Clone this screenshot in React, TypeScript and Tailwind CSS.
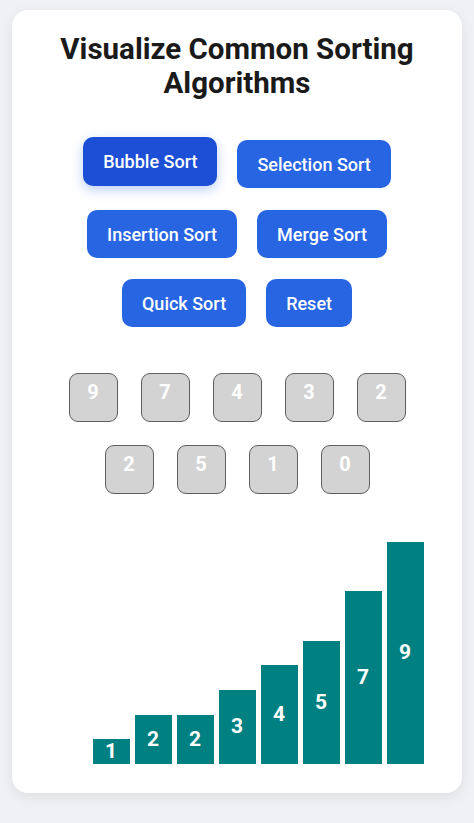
import React from "react";

const buttons = [
  ["Bubble Sort", true],
  ["Selection Sort", false],
  ["Insertion Sort", false],
  ["Merge Sort", false],
  ["Quick Sort", false],
  ["Reset", false],
] as const;

const boxes = [9, 7, 4, 3, 2, 2, 5, 1, 0];
const bars = [0, 1, 2, 2, 3, 4, 5, 7, 9];

export default function App() {
  return (
    <div
      className="min-h-screen bg-[#eff1f5] px-[12px] pt-[10px] pb-[31px]"
      style={{ fontFamily: "Roboto, 'Liberation Sans', sans-serif" }}
    >
      <div className="rounded-[16px] bg-white px-[20px] pt-[22px] pb-[29px] shadow-[0_4px_14px_rgba(0,0,0,0.08)]">
        <h1 className="text-center text-[29.5px] font-bold leading-[34px] text-[#1a1a1a]">
          Visualize Common Sorting
          <br />
          Algorithms
        </h1>

        <div className="mt-[40px] flex flex-wrap justify-center gap-x-[20px] gap-y-[21px]">
          {buttons.map(([label, active]) =>
            active ? (
              <button
                key={label}
                className="h-[49px] -translate-y-[3px] rounded-[10px] bg-[#1d4fd6] px-[20px] text-[18px] font-medium text-white shadow-[0_4px_12px_rgba(37,99,235,0.3)]"
              >
                {label}
              </button>
            ) : (
              <button
                key={label}
                className="h-[48px] rounded-[10px] bg-[#2865e3] px-[20px] text-[18px] font-medium text-white"
              >
                {label}
              </button>
            )
          )}
        </div>

        <div className="mx-auto mt-[46px] flex w-[380px] flex-wrap justify-center gap-[23px]">
          {boxes.map((v, i) => (
            <div
              key={i}
              className="h-[49px] w-[49px] rounded-[9px] border border-[#5f5f5f] bg-[#d3d3d3] text-center text-[20px] font-bold leading-[37px] text-white"
            >
              {v}
            </div>
          ))}
        </div>

        <div className="mt-[48px] flex h-[222px] items-end justify-center gap-[5px]">
          {bars.map((v, i) => (
            <div
              key={i}
              className="flex w-[37px] items-center justify-center overflow-hidden bg-[#008080] text-[21px] font-bold text-white"
              style={{ height: `${v * 24.65}px` }}
            >
              {v > 0 ? v : ""}
            </div>
          ))}
        </div>
      </div>
    </div>
  );
}
